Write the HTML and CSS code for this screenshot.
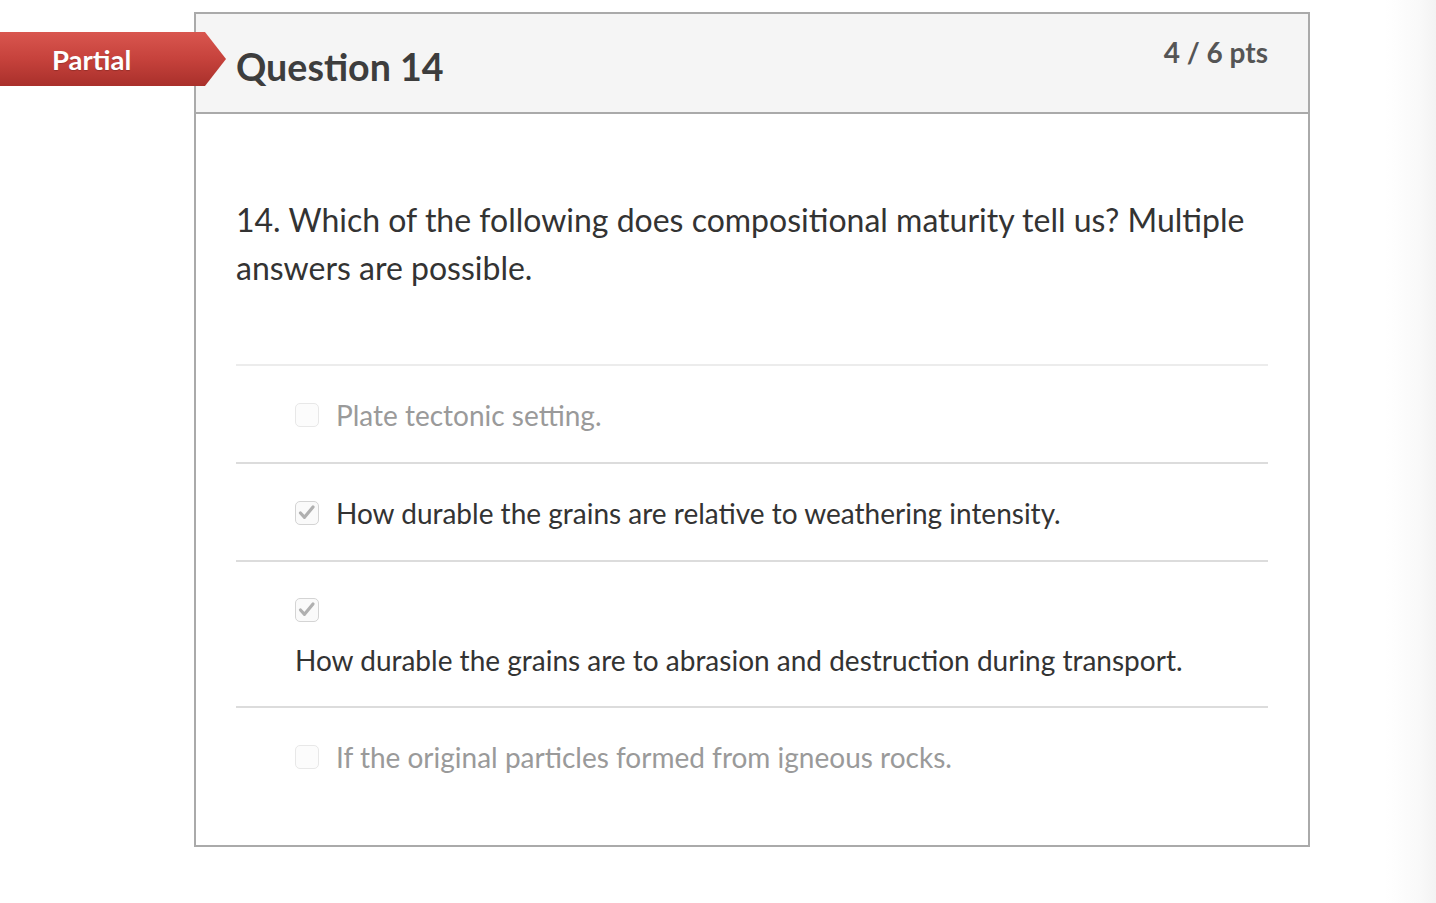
FILE: index.html
```html
<!DOCTYPE html>
<html>
<head>
<meta charset="utf-8">
<link rel="stylesheet" href="styles.css">
</head>
<body>
<div class="page">
  <div class="badge">Partial</div>
  <div class="card">
    <div class="card-header">
      <h2 class="title">Question 14</h2>
      <div class="pts">4 / 6 pts</div>
    </div>
    <div class="card-body">
      <p class="question">14. Which of the following does compositional maturity tell us? Multiple answers are possible.</p>
      <div class="answers">
        <div class="answer first">
          <span class="box"></span><span class="label muted">Plate tectonic setting.</span>
        </div>
        <div class="answer">
          <span class="box checked"><svg viewBox="0 0 24 24" width="24" height="24"><path d="M5.5 12l4 4.3 8.5-10.3" fill="none" stroke="#b0b0b0" stroke-width="3.2" stroke-linecap="round" stroke-linejoin="round"/></svg></span><span class="label">How durable the grains are relative to weathering intensity.</span>
        </div>
        <div class="answer stacked">
          <div class="line"><span class="box checked"><svg viewBox="0 0 24 24" width="24" height="24"><path d="M5.5 12l4 4.3 8.5-10.3" fill="none" stroke="#b0b0b0" stroke-width="3.2" stroke-linecap="round" stroke-linejoin="round"/></svg></span></div>
          <div class="label block">How durable the grains are to abrasion and destruction during transport.</div>
        </div>
        <div class="answer">
          <span class="box"></span><span class="label muted">If the original particles formed from igneous rocks.</span>
        </div>
      </div>
    </div>
  </div>
</div>
</body>
</html>
```
FILE: styles.css
```css
html, body {
  margin: 0;
  padding: 0;
}
body {
  width: 1436px;
  height: 903px;
  overflow: hidden;
  font-family: Lato, "Open Sans", sans-serif;
  background: linear-gradient(to right, #ffffff 0, #ffffff 1385px, #f9f9f9 1420px, #f3f3f3 1436px);
}
.page {
  position: relative;
  padding: 12px 0 0 194px;
}
.badge {
  position: absolute;
  left: 0;
  top: 32px;
  width: 226px;
  height: 54px;
  box-sizing: border-box;
  padding-left: 52px;
  line-height: 56px;
  color: #fff;
  font-weight: bold;
  font-size: 27.5px;
  background: linear-gradient(to bottom, #d9564f 0%, #c6423c 50%, #a9302b 100%);
  clip-path: polygon(0 0, 205px 0, 226px 27px, 205px 54px, 0 54px);
  text-shadow: 0 1px 1px rgba(0,0,0,0.2);
  z-index: 2;
}
.card {
  width: 1116px;
  box-sizing: border-box;
  border: 2px solid #aaaaaa;
  background: #fff;
}
.card-header {
  height: 98px;
  background: #f5f5f5;
  border-bottom: 2px solid #aaaaaa;
  display: flex;
  justify-content: space-between;
  align-items: flex-start;
  padding: 0 40px 0 40px;
}
.title {
  margin: 0;
  padding-top: 31px;
  font-size: 37.6px;
  line-height: 44px;
  font-weight: bold;
  color: #3d3d3d;
}
.pts {
  padding-top: 21px;
  font-size: 28px;
  line-height: 34px;
  font-weight: bold;
  color: #555;
}
.card-body {
  padding: 82px 40px 41px 40px;
}
.question {
  margin: 0 0 72px 0;
  font-size: 32px;
  line-height: 48px;
  color: #333;
}
.answer {
  border-top: 2px solid #dcdcdc;
  padding: 28px 0 26px 59px;
  display: flex;
  align-items: center;
  font-size: 28px;
  line-height: 42px;
}
.answer.first {
  border-top-color: #ececec;
}
.answer.stacked {
  display: block;
}
.answer .line {
  height: 42px;
  display: flex;
  align-items: center;
  margin-top: -1px;
  margin-bottom: 1px;
}
.box {
  width: 24px;
  height: 24px;
  box-sizing: border-box;
  border: 1px solid #e8e8e8;
  border-radius: 5px;
  background: #fcfcfc;
  margin-right: 17px;
  flex: none;
  display: inline-flex;
}
.box.checked {
  border-color: #d4d4d4;
  background: #fafafa;
}
.box svg {
  margin: -1px;
}
.label {
  color: #333;
}
.label.muted {
  color: #9a9a9a;
}
.label.block {
  margin-top: 8px;
  margin-bottom: -1px;
  padding-left: 0;
}
```
